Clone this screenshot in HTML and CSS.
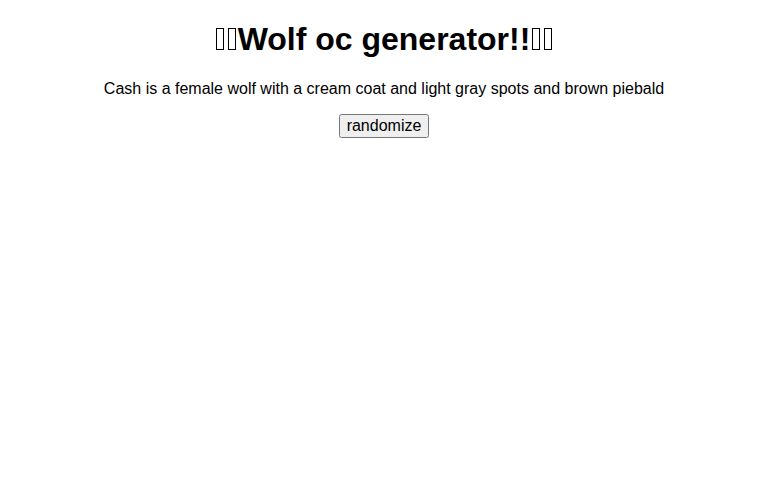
FILE: index.html
```html
<!DOCTYPE html>
<html lang="en">
<head>
    <meta charset="UTF-8">
    <title>Wolf oc generator</title>
    <link rel="stylesheet" href="styles.css">
</head>
<body>
    <h1><span class="tofu"></span><span class="tofu"></span>Wolf oc generator!!<span class="tofu"></span><span class="tofu"></span></h1>
    <p id="result">Cash is a female wolf with a cream coat and light gray spots and brown piebald</p>
    <button id="randomBtn">randomize</button>
</body>
</html>
```

FILE: styles.css
```css
body {
    margin: 0 8px;
    font-family: 'Liberation Sans', Arial, sans-serif;
    text-align: center;
}

h1 {
    font-size: 32px;
}

/* missing emoji glyphs show as empty boxes */
.tofu {
    display: inline-block;
    width: 6px;
    height: 20px;
    border: 1px solid #000;
    margin: 0 2px;
}

button {
    font-family: 'Liberation Sans', Arial, sans-serif;
    font-size: 16px;
}
```
